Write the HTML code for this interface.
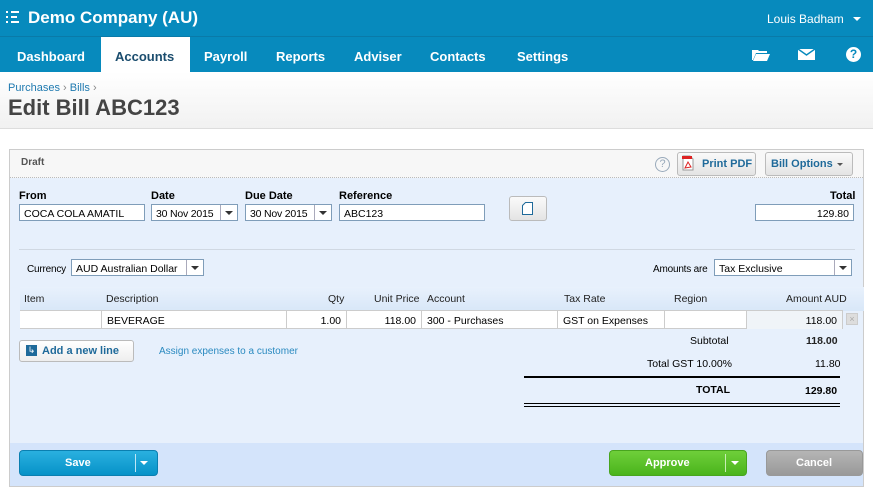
<!DOCTYPE html>
<html><head><style>
*{margin:0;padding:0;box-sizing:border-box}
body{width:873px;height:487px;overflow:hidden;background:#fff;font-family:"Liberation Sans",sans-serif;font-size:11px;color:#000;position:relative}
.a{position:absolute}
.top{left:0;top:0;width:873px;height:37px;background:#078abd;border-bottom:1px solid #0a7aa8}
.nav{left:0;top:37px;width:873px;height:35px;background:#078abd}
.nav span{position:absolute;top:12px;color:#fff;font-weight:bold;font-size:13px}
.inp{position:absolute;background:#fff;border:1px solid #7f9db9;height:17px;font-size:10.5px;padding:3px 4px 1px;line-height:12px;white-space:nowrap;overflow:hidden}
.dd{position:absolute;right:0;top:0;width:17px;height:15px;border-left:1px solid #aab}
.dd:after{content:"";position:absolute;left:4px;top:6px;border:4px solid transparent;border-top:4px solid #333;border-bottom:0}
.lbl{position:absolute;font-weight:bold;font-size:11px;top:190px}
.btn{position:absolute;border:1px solid #bbb;border-radius:3px;background:linear-gradient(#fafafa,#e4e4e4)}
.th{position:absolute;top:293px;font-size:10.5px;color:#222}
.cell{position:absolute;top:311px;height:18px;border-right:1px solid #ccc;font-size:10.5px;padding:4px 5px 2px}
</style></head><body>
<div class="a top"></div>
<svg class="a" style="left:6px;top:11px" width="14" height="12"><g fill="#fff"><rect x="0" y="0" width="2" height="2"/><rect x="0" y="5" width="2" height="2"/><rect x="0" y="10" width="2" height="2"/><rect x="5" y="0" width="8" height="2"/><rect x="5" y="5" width="6" height="2"/><rect x="5" y="10" width="8" height="2"/></g></svg>
<div class="a" style="left:28px;top:8px;color:#fff;font-weight:bold;font-size:17px">Demo Company (AU)</div>
<div class="a" style="left:767px;top:12px;color:#fff;font-size:12px">Louis Badham</div>
<div class="a" style="left:853px;top:17px;border:4px solid transparent;border-top:4px solid #fff;border-bottom:0"></div>
<div class="a nav">
<div class="a" style="left:101px;top:0;width:89px;height:35px;background:#fff"></div>
<span style="left:17px">Dashboard</span>
<span style="left:115px;color:#1b4d6e">Accounts</span>
<span style="left:204px">Payroll</span>
<span style="left:276px">Reports</span>
<span style="left:354px">Adviser</span>
<span style="left:430px">Contacts</span>
<span style="left:517px">Settings</span>
<svg class="a" style="left:752px;top:11px" width="18" height="13"><path d="M0 2h6l1 1h8v2H4L1 12H0z M4 6h14l-3 7H1z" fill="#fff"/></svg>
<svg class="a" style="left:798px;top:12px" width="17" height="11"><rect width="17" height="11" fill="#fff"/><path d="M0 0l8.5 6L17 0" stroke="#078abd" stroke-width="1.5" fill="none"/></svg>
<div class="a" style="left:846px;top:10px;width:15px;height:15px;border-radius:50%;background:#fff;color:#078abd;font-weight:bold;font-size:12px;text-align:center;line-height:15px">?</div>
</div>
<div class="a" style="left:0;top:72px;width:873px;height:57px;background:linear-gradient(#fff,#f1f1f1);border-bottom:1px solid #ddd"></div>
<div class="a" style="left:8px;top:82px;font-size:11px;color:#1f7ab0">Purchases <span style="color:#888">›</span> Bills <span style="color:#888">›</span></div>
<div class="a" style="left:8px;top:95px;font-size:22px;font-weight:bold;color:#444">Edit Bill ABC123</div>

<div class="a" style="left:9px;top:149px;width:855px;height:338px;border:1px solid #ccc;background:#e7f0fc"></div>
<div class="a" style="left:10px;top:150px;width:853px;height:28px;background:#f7f7f7;border-bottom:1px dotted #bbb"></div>
<div class="a" style="left:21px;top:157px;font-weight:bold;font-size:10px;color:#555">Draft</div>
<div class="a" style="left:655px;top:157px;width:15px;height:15px;border-radius:50%;border:1px solid #9ab;color:#9ab;font-size:11px;text-align:center;line-height:13px">?</div>
<div class="btn" style="left:677px;top:152px;width:79px;height:24px"></div>
<svg class="a" style="left:682px;top:155px" width="12" height="16"><path d="M1 1h7l3 3v11H1z" fill="#fff" stroke="#999"/><rect x="0" y="1" width="10" height="3" fill="#d22"/><path d="M3 13l3-6 3 5z" fill="none" stroke="#d22"/></svg>
<div class="a" style="left:702px;top:158px;font-weight:bold;color:#1f6a9a;font-size:11px">Print PDF</div>
<div class="btn" style="left:765px;top:152px;width:88px;height:24px"></div>
<div class="a" style="left:771px;top:158px;font-weight:bold;color:#1f6a9a;font-size:11px">Bill Options</div>
<div class="a" style="left:837px;top:163px;border:3px solid transparent;border-top:3px solid #555;border-bottom:0"></div>

<div class="lbl" style="left:19px">From</div>
<div class="lbl" style="left:151px">Date</div>
<div class="lbl" style="left:245px">Due Date</div>
<div class="lbl" style="left:339px">Reference</div>
<div class="lbl" style="left:830px">Total</div>
<div class="inp" style="left:19px;top:204px;width:126px">COCA COLA AMATIL</div>
<div class="inp" style="left:151px;top:204px;width:87px;letter-spacing:-.2px">30 Nov 2015<div class="dd"></div></div>
<div class="inp" style="left:245px;top:204px;width:87px;letter-spacing:-.2px">30 Nov 2015<div class="dd"></div></div>
<div class="inp" style="left:339px;top:204px;width:146px">ABC123</div>
<div class="btn" style="left:509px;top:196px;width:38px;height:25px"></div>
<svg class="a" style="left:522px;top:202px" width="11" height="13"><path d="M3.5 .5h7v12h-10v-9z" fill="#fff" stroke="#1f6a9a"/></svg>
<div class="inp" style="left:755px;top:204px;width:99px;text-align:right">129.80</div>
<div class="a" style="left:19px;top:249px;width:836px;height:1px;background:#d0d8e2"></div>

<div class="a" style="left:27px;top:264px;font-size:10px;letter-spacing:-.2px">Currency</div>
<div class="inp" style="left:71px;top:259px;width:133px">AUD Australian Dollar<div class="dd"></div></div>
<div class="a" style="left:653px;top:264px;font-size:10px;letter-spacing:-.2px">Amounts are</div>
<div class="inp" style="left:714px;top:259px;width:138px">Tax Exclusive<div class="dd"></div></div>

<div class="a" style="left:20px;top:287px;width:844px;height:24px;background:linear-gradient(#e8f1fc,#d8e7f8)"></div>
<div class="th" style="left:24px">Item</div>
<div class="th" style="left:106px">Description</div>
<div class="th" style="left:328px">Qty</div>
<div class="th" style="left:374px">Unit Price</div>
<div class="th" style="left:427px">Account</div>
<div class="th" style="left:564px">Tax Rate</div>
<div class="th" style="left:674px">Region</div>
<div class="th" style="left:786px">Amount AUD</div>
<div class="a" style="left:20px;top:310px;width:823px;height:19px;background:#fff;border-top:1px solid #ccc;border-bottom:1px solid #ccc"></div>
<div class="cell" style="left:20px;width:82px"></div>
<div class="cell" style="left:102px;width:185px">BEVERAGE</div>
<div class="cell" style="left:287px;width:60px;text-align:right">1.00</div>
<div class="cell" style="left:347px;width:75px;text-align:right">118.00</div>
<div class="cell" style="left:422px;width:136px">300 - Purchases</div>
<div class="cell" style="left:558px;width:107px">GST on Expenses</div>
<div class="cell" style="left:665px;width:82px"></div>
<div class="cell" style="left:747px;width:96px;text-align:right;background:#f0f4f8">118.00</div>
<div class="a" style="left:846px;top:313px;width:12px;height:12px;background:#ddd;border:1px solid #ccc;color:#aaa;font-size:9px;line-height:10px;text-align:center">×</div>

<div class="btn" style="left:19px;top:340px;width:115px;height:22px;background:linear-gradient(#fff,#eee)"></div>
<div class="a" style="left:26px;top:345px;width:11px;height:11px;background:#1f6a9a;color:#fff;font-size:9px;line-height:10px;text-align:center">↳</div>
<div class="a" style="left:42px;top:345px;font-weight:bold;color:#1f6a9a;font-size:11px">Add a new line</div>
<div class="a" style="left:159px;top:346px;color:#2a8ac0;font-size:10px">Assign expenses to a customer</div>

<div class="a" style="left:690px;top:335px;font-size:10.5px">Subtotal</div>
<div class="a" style="left:806px;top:335px;font-size:10.5px;font-weight:bold;color:#222">118.00</div>
<div class="a" style="left:647px;top:358px;font-size:10.5px">Total GST 10.00%</div>
<div class="a" style="left:815px;top:358px;font-size:10.5px">11.80</div>
<div class="a" style="left:524px;top:376px;width:316px;height:2px;background:#000"></div>
<div class="a" style="left:696px;top:384px;font-size:10.5px;font-weight:bold">TOTAL</div>
<div class="a" style="left:805px;top:385px;font-size:10.5px;font-weight:bold">129.80</div>
<div class="a" style="left:524px;top:403px;width:316px;height:4px;border-top:1px solid #000;border-bottom:1px solid #000"></div>

<div class="a" style="left:10px;top:443px;width:853px;height:43px;background:#d4e4fb"></div>
<div class="a" style="left:19px;top:450px;width:139px;height:26px;border-radius:4px;background:linear-gradient(#2ab0e0,#0692c8);border:1px solid #0a7fb0"></div>
<div class="a" style="left:65px;top:457px;color:#fff;font-weight:bold;font-size:11px">Save</div>
<div class="a" style="left:135px;top:454px;width:1px;height:18px;background:#bfe6f5"></div>
<div class="a" style="left:140px;top:461px;border:4px solid transparent;border-top:4px solid #fff;border-bottom:0"></div>
<div class="a" style="left:609px;top:450px;width:138px;height:26px;border-radius:4px;background:linear-gradient(#6fcf3a,#4ab41c);border:1px solid #48a51e"></div>
<div class="a" style="left:645px;top:457px;color:#fff;font-weight:bold;font-size:11px">Approve</div>
<div class="a" style="left:725px;top:454px;width:1px;height:18px;background:#c8eeb5"></div>
<div class="a" style="left:731px;top:461px;border:4px solid transparent;border-top:4px solid #fff;border-bottom:0"></div>
<div class="a" style="left:766px;top:450px;width:97px;height:26px;border-radius:4px;background:linear-gradient(#b5b5b5,#999);border:1px solid #999"></div>
<div class="a" style="left:796px;top:457px;color:#fff;font-weight:bold;font-size:11px">Cancel</div>
</body></html>
